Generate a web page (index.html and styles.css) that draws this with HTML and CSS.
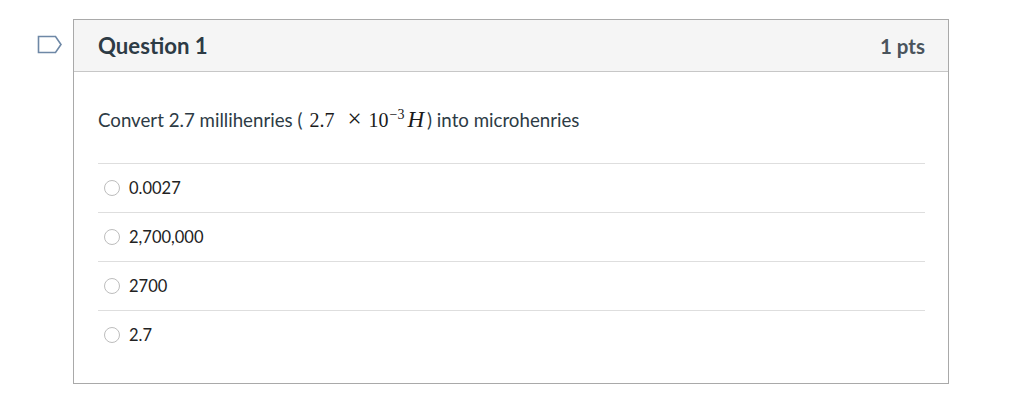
FILE: index.html
```html
<!DOCTYPE html>
<html>
<head>
<meta charset="utf-8">
<link rel="stylesheet" href="styles.css">
</head>
<body>
<div class="page">
  <div class="flag">
    <svg width="27" height="19" viewBox="0 0 27 19"><path d="M1.5 1.5 H18.5 L24 9.5 L18.5 17.5 H1.5 Z" fill="none" stroke="#6e88a6" stroke-width="1.6" stroke-linejoin="miter"/></svg>
  </div>
  <div class="card">
    <div class="header">
      <span class="title">Question 1</span>
      <span class="pts">1 pts</span>
    </div>
    <div class="body">
      <p class="text">Convert 2.7 millihenries (<span class="math"><span class="mn">2.7</span><span class="mo">×</span><span class="mn">10</span><span class="sup">−3</span><span class="mi">H</span></span>) into microhenries</p>
      <div class="answers">
        <div class="answer"><span class="radio"></span><span class="label">0.0027</span></div>
        <div class="answer"><span class="radio"></span><span class="label">2,700,000</span></div>
        <div class="answer"><span class="radio"></span><span class="label">2700</span></div>
        <div class="answer"><span class="radio"></span><span class="label">2.7</span></div>
      </div>
    </div>
  </div>
</div>
</body>
</html>
```
FILE: styles.css
```css
html, body {
  margin: 0;
  padding: 0;
  background: #fff;
}
body {
  font-family: Lato, "Liberation Sans", sans-serif;
  color: #2d3b45;
}
.page {
  display: flex;
  align-items: flex-start;
  padding-top: 19px;
}
.flag {
  width: 73px;
  display: flex;
  justify-content: flex-start;
  padding-left: 37px;
  box-sizing: border-box;
  padding-top: 16px;
}
.flag svg { display: block; }
.card {
  width: 876px;
  box-sizing: border-box;
  border: 1px solid #a9a9a9;
}
.header {
  height: 51px;
  background: #f5f5f5;
  border-bottom: 1px solid #c7c7c7;
  display: flex;
  align-items: center;
  justify-content: space-between;
  padding: 0 23px 0 24px;
}
.title {
  font-size: 22.2px;
  font-weight: 700;
  color: #2d3b45;
}
.pts {
  font-size: 20.5px;
  font-weight: 700;
  color: #4a545c;
}
.body {
  padding: 35px 23px 24px 24px;
}
.text {
  margin: 0 0 27px 0;
  font-size: 18.7px;
  line-height: 26px;
  color: #2d3b45;
}
.math {
  font-family: "Liberation Serif", serif;
  font-size: 20px;
  color: #1a1a1a;
  margin-left: 7px;
}
.mo {
  font-size: 25px;
  line-height: 20px;
  margin: 0 7px 0 13px;
}
.sup {
  font-size: 14px;
  position: relative;
  top: -8px;
  margin-left: 1px;
}
.mi {
  font-style: italic;
  font-size: 23px;
  margin-left: 3px;
  margin-right: 3px;
}
.answer {
  height: 48px;
  border-top: 1px solid #dedede;
  display: flex;
  align-items: center;
  padding-left: 6px;
}
.radio {
  width: 14px;
  height: 14px;
  border: 1px solid #bdbdbd;
  border-radius: 50%;
  margin-right: 9px;
  flex: none;
}
.label {
  font-size: 16.5px;
  color: #222;
}
```
